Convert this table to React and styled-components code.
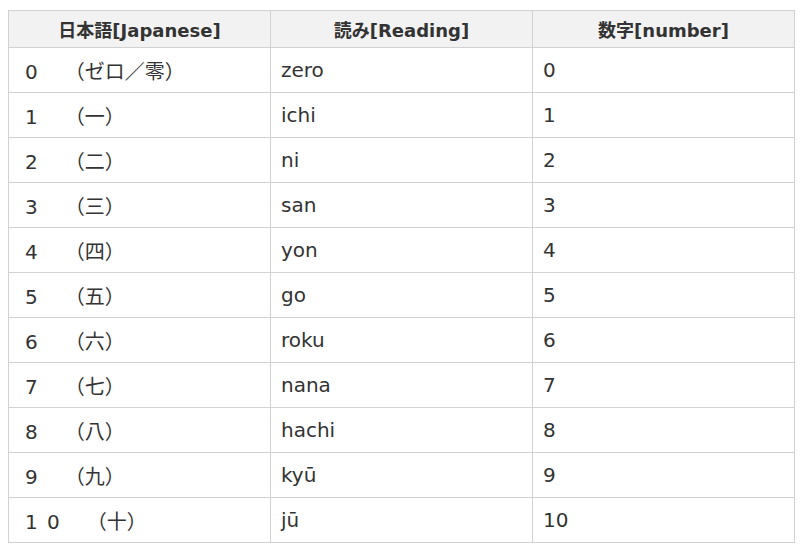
import React from "react";
import styled, { createGlobalStyle } from "styled-components";

const Global = createGlobalStyle`
  html, body { margin: 0; padding: 0; background: #ffffff; }
  body { padding: 10px 0 0 8px; font-family: "DejaVu Sans", "Noto Sans CJK JP", sans-serif; color: #333333; }
`;

const Table = styled.table`
  width: 787px;
  table-layout: fixed;
  border-collapse: collapse;
  border: 1px solid #d2d2d2;
`;

const HeadCell = styled.th`
  height: 36px;
  padding: 0;
  background: #f2f2f2;
  border: 1px solid #d2d2d2;
  font-size: 18px;
  font-weight: bold;
  color: #333333;
  text-align: center;
  vertical-align: middle;
`;

const Cell = styled.td`
  height: 44px;
  padding: 0 0 0 ${(p) => (p.$first ? 16 : 10)}px;
  border: 1px solid #d2d2d2;
  font-size: 20px;
  color: #333333;
  vertical-align: middle;
  white-space: pre;
`;

const Num = styled.span`
  display: inline-block;
  word-spacing: 3px;
`;

const Kanji = styled.span`
  display: inline-block;
  margin-left: 27px;
  font-family: "Noto Sans CJK JP", sans-serif;
  font-size: 20px;
`;

const rows = [
  ["0", "（ゼロ／零）", "zero", "0"],
  ["1", "（一）", "ichi", "1"],
  ["2", "（二）", "ni", "2"],
  ["3", "（三）", "san", "3"],
  ["4", "（四）", "yon", "4"],
  ["5", "（五）", "go", "5"],
  ["6", "（六）", "roku", "6"],
  ["7", "（七）", "nana", "7"],
  ["8", "（八）", "hachi", "8"],
  ["9", "（九）", "kyū", "9"],
  ["1 0", "（十）", "jū", "10"],
];

export default function App() {
  return (
    <>
      <Global />
      <Table>
        <thead>
          <tr>
            <HeadCell>日本語[Japanese]</HeadCell>
            <HeadCell>読み[Reading]</HeadCell>
            <HeadCell>数字[number]</HeadCell>
          </tr>
        </thead>
        <tbody>
          {rows.map(([n, k, r, d]) => (
            <tr key={d}>
              <Cell $first>
                <Num>{n}</Num>
                <Kanji>{k}</Kanji>
              </Cell>
              <Cell>{r}</Cell>
              <Cell>{d}</Cell>
            </tr>
          ))}
        </tbody>
      </Table>
    </>
  );
}
